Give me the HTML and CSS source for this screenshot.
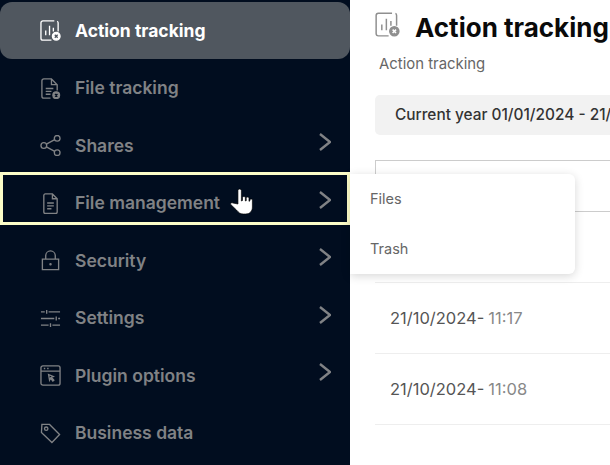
FILE: index.html
```html
<!DOCTYPE html>
<html>
<head>
    <meta charset="UTF-8">
    <title>Action tracking</title>
    <link rel="stylesheet" href="styles.css">
</head>
<body>
    <div class="page">
        <nav class="sidebar">
            <a class="nav-item active">
                <svg class="nav-icon" viewBox="0 0 22 22"><path d="M15 1H3a2 2 0 0 0-2 2v16a2 2 0 0 0 2 2h9M19 12V3a2 2 0 0 0-1-1.700M6 16v-5M10 16V6M14 12V8"/><circle class="badge" cx="17" cy="17" r="4"/><path class="badge-x" d="M15.500 15.500l3 3M18.500 15.500l-3 3"/></svg>
                <span>Action tracking</span>
            </a>
            <a class="nav-item">
                <svg class="nav-icon" viewBox="0 0 22 22"><path d="M11 21H4a2 2 0 0 1-2-2V3a2 2 0 0 1 2-2h8l6 6v6M12 1v6h6M6 11h8M6 14h6M6 17h5"/><circle class="badge" cx="17" cy="18" r="3.500"/><path class="badge-x" d="M15.700 16.700l2.600 2.600M18.300 16.700l-2.600 2.600"/></svg>
                <span>File tracking</span>
            </a>
            <a class="nav-item">
                <svg class="nav-icon" viewBox="0 0 22 22"><circle cx="4" cy="11" r="3"/><circle cx="18" cy="3.500" r="3"/><circle cx="18" cy="18.500" r="3"/><path d="M6.700 9.500l8.700-4.600M6.700 12.500l8.700 4.600"/></svg>
                <span>Shares</span>
                <svg class="chevron" viewBox="0 0 12 18"><path d="M1 1l10 8-10 8"/></svg>
            </a>
            <a class="nav-item hovered">
                <svg class="nav-icon" viewBox="0 0 22 22"><path d="M18 20a1.500 1.500 0 0 1-1.500 1.500h-11A1.500 1.500 0 0 1 4 20V2.500A1.500 1.500 0 0 1 5.500 1H13l5 5zM13 1v5h5M7.500 10.500h7M7.500 13.500h7M7.500 16.500h4.500"/></svg>
                <span>File management</span>
                <svg class="chevron" viewBox="0 0 12 18"><path d="M1 1l10 8-10 8"/></svg>
            </a>
            <a class="nav-item">
                <svg class="nav-icon" viewBox="0 0 22 22"><path d="M2.500 9.500h17v11h-17zM6 9.500V6a5 5 0 0 1 10 0v3.500"/><circle cx="11" cy="15" r=".6"/></svg>
                <span>Security</span>
                <svg class="chevron" viewBox="0 0 12 18"><path d="M1 1l10 8-10 8"/></svg>
            </a>
            <a class="nav-item">
                <svg class="nav-icon" viewBox="0 0 22 22"><path d="M1 4h4M9 4h12M7 2v4M1 11h14M19 11h2M17 9v4M1 18h8M13 18h8M11 16v4"/></svg>
                <span>Settings</span>
                <svg class="chevron" viewBox="0 0 12 18"><path d="M1 1l10 8-10 8"/></svg>
            </a>
            <a class="nav-item">
                <svg class="nav-icon" viewBox="0 0 22 22"><rect x="1" y="1" width="20" height="20" rx="2"/><path d="M1 6.500h20M4 3.700h1.500M7.500 3.700H9M9 10l5 2-2 1 2.500 3-1 .8-2.500-3-1 2z"/></svg>
                <span>Plugin options</span>
                <svg class="chevron" viewBox="0 0 12 18"><path d="M1 1l10 8-10 8"/></svg>
            </a>
            <a class="nav-item">
                <svg class="nav-icon" viewBox="0 0 22 22"><path d="M2 1.500h8l10.500 10.500-8 8.500L1.500 10z"/><circle cx="6.500" cy="6" r="1.800"/></svg>
                <span>Business data</span>
            </a>
        </nav>

        <main class="content">
            <div class="title-row">
                <svg class="title-icon" viewBox="0 0 22 22"><path d="M15 1H3a2 2 0 0 0-2 2v16a2 2 0 0 0 2 2h9M19 12V3a2 2 0 0 0-1-1.700M6 16v-5M10 16V6M14 12V8"/><circle class="badge" cx="17" cy="17" r="4"/><path class="badge-x" d="M15.500 15.500l3 3M18.500 15.500l-3 3"/></svg>
                <h1>Action tracking</h1>
            </div>
            <div class="subtitle">Action tracking</div>
            <div class="date-bar">Current year 01/01/2024 - 21/10/2024</div>

            <div class="table">
                <div class="table-head"></div>
                <div class="table-row"></div>
                <div class="table-row"><span class="date">21/10/2024-</span> <span class="time">11:17</span></div>
                <div class="table-row"><span class="date">21/10/2024-</span> <span class="time">11:08</span></div>
            </div>
        </main>

        <div class="submenu">
            <a>Files</a>
            <a>Trash</a>
        </div>

        <svg class="cursor" viewBox="0 0 22 27" preserveAspectRatio="none"><path d="M7 2.500a1.500 1.500 0 0 1 3 0V13l1-.5V9.500a1.300 1.300 0 0 1 2.500 0V13l.8-.3v-2.400a1.200 1.200 0 0 1 2.400 0v3l.8-.3V12a1.100 1.100 0 0 1 2.200 0v7c0 4-2 7-6 7h-2c-3 0-4-1.500-6-4l-5-5.500c-.7-1 .6-2.300 1.800-1.500L7 16z"/></svg>
    </div>
</body>
</html>
```

FILE: styles.css
```css
html, body {
    margin: 0;
    padding: 0;
}
body {
    font-family: Inter, "Noto Sans", sans-serif;
    background-color: white;
}
.page {
    position: relative;
    display: flex;
    width: 610px;
    height: 465px;
    overflow: hidden;
}

/* sidebar */
.sidebar {
    flex: 0 0 350px;
    box-sizing: border-box;
    padding-top: 2px;
    background-color: #010d1f;
}
.nav-item {
    position: relative;
    display: flex;
    align-items: center;
    box-sizing: border-box;
    height: 57.5px;
    padding: 0 19px 0 40px;
    color: #808285;
    font-size: 17.5px;
    font-weight: 600;
}
.nav-item span {
    flex: 1;
    margin-left: 14px;
    margin-top: -1px;
}
.nav-item.active {
    height: 57px;
    margin-bottom: .5px;
    border-radius: 12px;
    background-color: #50575f;
    color: white;
    font-weight: 700;
}
.nav-item.hovered::after {
    content: "";
    position: absolute;
    top: -2.500px;
    left: 0;
    right: 0;
    height: 47px;
    border: 3px solid #fdfdc8;
}
.nav-icon {
    flex: none;
    width: 21px;
    height: 21px;
    fill: none;
    stroke: currentColor;
    stroke-width: 1.400;
}
.badge {
    fill: currentColor;
}
.nav-icon .badge-x {
    stroke: #010d1f;
}
.active .nav-icon .badge-x {
    stroke: #50575f;
}
.chevron {
    flex: none;
    width: 12px;
    height: 18px;
    margin-bottom: 7px;
    fill: none;
    stroke: currentColor;
    stroke-width: 2.400;
}

/* main area */
.content {
    flex: none;
    width: 400px;
    box-sizing: border-box;
    padding: 11px 0 0 25px;
}
.title-row {
    display: flex;
    align-items: center;
    height: 30px;
}
.title-row h1 {
    margin: 2px 0 0 15px;
    color: #0a0a0a;
    font-size: 26px;
    font-weight: 700;
    white-space: nowrap;
}
.title-icon {
    flex: none;
    width: 25px;
    height: 25px;
    margin-bottom: 3px;
    fill: none;
    color: #8f8f8f;
    stroke: #8f8f8f;
    stroke-width: 1.300;
}
.title-icon .badge-x {
    stroke: white;
}
.subtitle {
    margin: 12px 0 0 4px;
    color: #666;
    font-size: 14.900px;
    line-height: 22px;
}
.date-bar {
    box-sizing: border-box;
    height: 40px;
    margin-top: 20px;
    padding-left: 20px;
    border-radius: 5px;
    background-color: #f2f2f2;
    color: #333;
    font-size: 15.400px;
    font-weight: 500;
    line-height: 40px;
    white-space: nowrap;
}
.table {
    margin-top: 25px;
}
.table-head {
    height: 50px;
    border: 1px solid #ccc;
    border-right: none;
}
.table-row {
    display: flex;
    align-items: center;
    gap: 4px;
    box-sizing: border-box;
    height: 71px;
    padding-left: 15px;
    border-bottom: 1px solid #eee;
    font-size: 16.500px;
}
.date {
    color: #555;
}
.time {
    color: #888;
}

/* popover and pointer lie over the page */
.submenu {
    position: absolute;
    top: 174px;
    left: 350px;
    display: flex;
    flex-direction: column;
    width: 225px;
    height: 100px;
    border-radius: 0 6px 6px 0;
    background-color: white;
    box-shadow: 0 2px 10px rgba(0,0,0,0.16);
}
.submenu a {
    flex: 1;
    padding-left: 20px;
    color: #666;
    font-size: 14.500px;
    line-height: 50px;
}
.cursor {
    position: absolute;
    top: 188px;
    left: 230px;
    width: 25px;
    height: 27px;
    fill: white;
    stroke: black;
    stroke-width: .6;
}
```
